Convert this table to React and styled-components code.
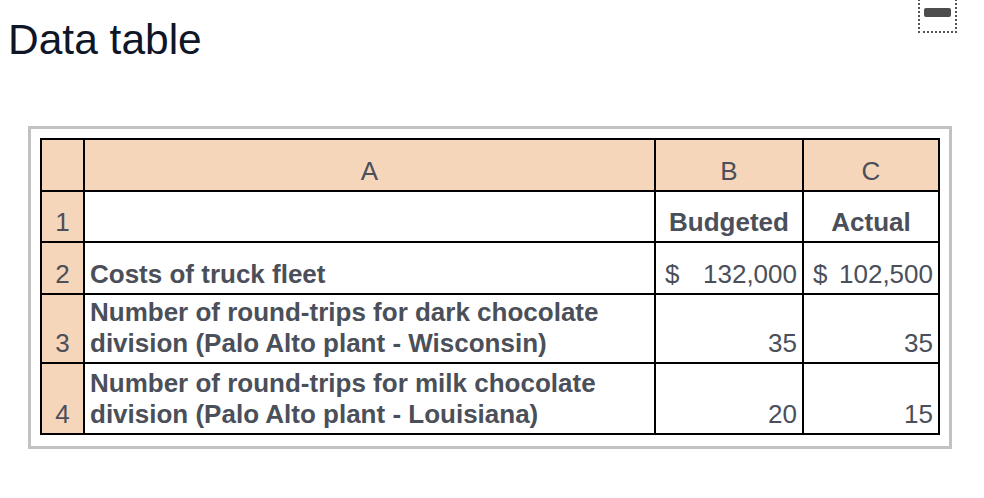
import React from "react";
import styled, { createGlobalStyle } from "styled-components";

const GlobalStyle = createGlobalStyle`
  body {
    margin: 0;
    background: #fff;
    font-family: "Liberation Sans", Arial, sans-serif;
  }
`;

const rows = [
  { n: 1, h: 51, label: "", b: "Budgeted", c: "Actual", head: true },
  { n: 2, h: 52, label: "Costs of truck fleet", b: "132,000", c: "102,500", money: true },
  {
    n: 3,
    h: 69,
    label: ["Number of round-trips for dark chocolate", "division (Palo Alto plant - Wisconsin)"],
    b: "35",
    c: "35",
  },
  {
    n: 4,
    h: 71,
    label: ["Number of round-trips for milk chocolate", "division (Palo Alto plant - Louisiana)"],
    b: "20",
    c: "15",
  },
];

function App() {
  return (
    <Page>
      <GlobalStyle />
      <Header>
        <Title>Data table</Title>
        <MinButton aria-label="Minimize">
          <MinBar />
        </MinButton>
      </Header>

      <Panel>
        <Sheet>
          <colgroup>
            <Col $w={43} />
            <Col $w={571} />
            <Col $w={148} />
            <Col $w={136} />
          </colgroup>
          <tbody>
            <Row $h={52}>
              <Cell $shade $align="center"></Cell>
              <Cell $shade $align="center">A</Cell>
              <Cell $shade $align="center">B</Cell>
              <Cell $shade $align="center">C</Cell>
            </Row>
            {rows.map((r) => (
              <Row key={r.n} $h={r.h}>
                <Cell $shade $align="center">{r.n}</Cell>
                <Cell $bold>
                  {Array.isArray(r.label)
                    ? r.label.map((l) => <Line key={l}>{l}</Line>)
                    : r.label}
                </Cell>
                {r.head ? (
                  <>
                    <Cell $bold $align="center">{r.b}</Cell>
                    <Cell $bold $align="center">{r.c}</Cell>
                  </>
                ) : r.money ? (
                  <>
                    <Cell>
                      <Money>
                        <span>$</span>
                        <span>{r.b}</span>
                      </Money>
                    </Cell>
                    <Cell>
                      <Money>
                        <span>$</span>
                        <span>{r.c}</span>
                      </Money>
                    </Cell>
                  </>
                ) : (
                  <>
                    <Cell $align="right">{r.b}</Cell>
                    <Cell $align="right">{r.c}</Cell>
                  </>
                )}
              </Row>
            ))}
          </tbody>
        </Sheet>
      </Panel>
    </Page>
  );
}

export default App;

const Page = styled.div`
  width: 984px;
  min-height: 498px;
`;

const Header = styled.div`
  display: flex;
  justify-content: space-between;
  align-items: flex-start;
  padding: 15px 27px 0 8px;
`;

const Title = styled.h1`
  margin: 0;
  font-size: 42.5px;
  line-height: 50px;
  font-weight: 400;
  color: #0e1628;
`;

const MinButton = styled.button`
  margin-top: -24px;
  width: 39px;
  height: 42px;
  padding: 0;
  background: transparent;
  border: 2px dotted #555;
  display: flex;
  align-items: flex-end;
  justify-content: center;
  padding-bottom: 14px;
  box-sizing: border-box;
`;

const MinBar = styled.span`
  display: block;
  width: 27px;
  height: 9px;
  border-radius: 2px;
  background: #4d4d4d;
`;

const Panel = styled.div`
  box-sizing: border-box;
  width: 924px;
  margin: 61px 0 0 28px;
  padding: 9px 9px 11px;
  border: 3px solid #c2c2c2;
`;

const Sheet = styled.table`
  width: 900px;
  border-collapse: collapse;
  table-layout: fixed;
`;

const Col = styled.col`
  width: ${(p) => p.$w}px;
`;

const Row = styled.tr`
  height: ${(p) => p.$h}px;
`;

const Cell = styled.td`
  border: 2px solid #000;
  padding: 0 5px 3px 5px;
  vertical-align: bottom;
  font-size: 26px;
  line-height: 31px;
  color: #4b4f59;
  white-space: nowrap;
  text-align: ${(p) => p.$align || "left"};
  font-weight: ${(p) => (p.$bold ? 700 : 400)};
  background: ${(p) => (p.$shade ? "#f6d6bb" : "#fff")};
`;

const Line = styled.div``;

const Money = styled.div`
  display: flex;
  justify-content: space-between;
  padding-left: 4px;
`;
